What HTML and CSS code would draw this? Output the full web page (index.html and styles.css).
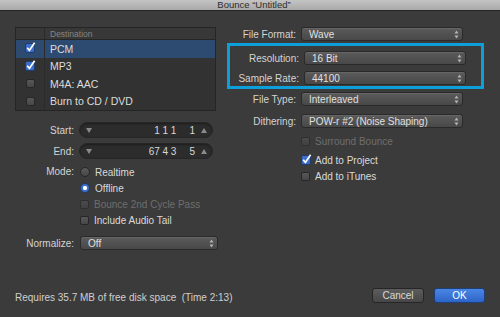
FILE: index.html
```html
<!DOCTYPE html>
<html lang="en">
<head>
    <meta charset="UTF-8">
    <title>Bounce "Untitled"</title>
    <link rel="stylesheet" href="styles.css">
</head>
<body>
<div class="window">
    <div class="titlebar">Bounce “Untitled”</div>

    <div class="main">
        <!-- Left side: destinations and range -->
        <div class="col-left">
            <div class="dest-table">
                <div class="dest-row dest-head">
                    <span class="dest-check"></span>
                    <span class="dest-name">Destination</span>
                </div>
                <div class="dest-row selected">
                    <span class="dest-check">
                        <svg class="check" width="11" height="11" viewBox="0 0 11 11"><rect x="0.5" y="1.5" width="9" height="9" rx="1.5" fill="#3b6fc9" stroke="#1f3c6e"/><path d="M2.2 5.8 L4.4 8.4 L9.6 0.8" fill="none" stroke="#fff" stroke-width="1.7"/></svg>
                    </span>
                    <span class="dest-name">PCM</span>
                </div>
                <div class="dest-row">
                    <span class="dest-check">
                        <svg class="check" width="11" height="11" viewBox="0 0 11 11"><rect x="0.5" y="1.5" width="9" height="9" rx="1.5" fill="#3b6fc9" stroke="#1f3c6e"/><path d="M2.2 5.8 L4.4 8.4 L9.6 0.8" fill="none" stroke="#fff" stroke-width="1.7"/></svg>
                    </span>
                    <span class="dest-name">MP3</span>
                </div>
                <div class="dest-row">
                    <span class="dest-check"><span class="box"></span></span>
                    <span class="dest-name">M4A: AAC</span>
                </div>
                <div class="dest-row">
                    <span class="dest-check"><span class="box"></span></span>
                    <span class="dest-name">Burn to CD / DVD</span>
                </div>
            </div>

            <div class="field-row start-row">
                <span class="label">Start:</span>
                <div class="stepper">
                    <svg width="6" height="5" viewBox="0 0 6 5"><path d="M0 0 H6 L3 5Z" fill="#8a8a8a"/></svg>
                    <span class="step-main">1 1 1</span>
                    <span class="step-last">1</span>
                    <svg width="6" height="5" viewBox="0 0 6 5"><path d="M0 5 H6 L3 0Z" fill="#8a8a8a"/></svg>
                </div>
            </div>
            <div class="field-row end-row">
                <span class="label">End:</span>
                <div class="stepper">
                    <svg width="6" height="5" viewBox="0 0 6 5"><path d="M0 0 H6 L3 5Z" fill="#8a8a8a"/></svg>
                    <span class="step-main">67 4 3</span>
                    <span class="step-last">5</span>
                    <svg width="6" height="5" viewBox="0 0 6 5"><path d="M0 5 H6 L3 0Z" fill="#8a8a8a"/></svg>
                </div>
            </div>

            <div class="mode-grid">
                <span class="label">Mode:</span>
                <div class="options">
                    <div class="option"><span class="radio"></span>Realtime</div>
                    <div class="option"><span class="radio on"></span>Offline</div>
                    <div class="option disabled"><span class="box"></span>Bounce 2nd Cycle Pass</div>
                    <div class="option"><span class="box"></span>Include Audio Tail</div>
                </div>
            </div>

            <div class="field-row normalize-row">
                <span class="label">Normalize:</span>
                <div class="popup">
                    <span>Off</span>
                    <svg class="updown" width="5" height="9" viewBox="0 0 5 9"><path d="M2.5 0.5 L4.5 3.5 H0.5Z M2.5 8.5 L0.5 5.5 H4.5Z" fill="#b4b4b4"/></svg>
                </div>
            </div>
        </div>

        <!-- Right side: file settings -->
        <div class="col-right">
            <div class="form-row first">
                <span class="label">File Format:</span>
                <div class="popup"><span>Wave</span><svg class="updown" width="5" height="9" viewBox="0 0 5 9"><path d="M2.5 0.5 L4.5 3.5 H0.5Z M2.5 8.5 L0.5 5.5 H4.5Z" fill="#b4b4b4"/></svg></div>
            </div>
            <div class="highlight">
                <div class="form-row">
                    <span class="label">Resolution:</span>
                    <div class="popup"><span>16 Bit</span><svg class="updown" width="5" height="9" viewBox="0 0 5 9"><path d="M2.5 0.5 L4.5 3.5 H0.5Z M2.5 8.5 L0.5 5.5 H4.5Z" fill="#b4b4b4"/></svg></div>
                </div>
                <div class="form-row">
                    <span class="label">Sample Rate:</span>
                    <div class="popup"><span>44100</span><svg class="updown" width="5" height="9" viewBox="0 0 5 9"><path d="M2.5 0.5 L4.5 3.5 H0.5Z M2.5 8.5 L0.5 5.5 H4.5Z" fill="#b4b4b4"/></svg></div>
                </div>
            </div>
            <div class="form-row filetype">
                <span class="label">File Type:</span>
                <div class="popup"><span>Interleaved</span><svg class="updown" width="5" height="9" viewBox="0 0 5 9"><path d="M2.5 0.5 L4.5 3.5 H0.5Z M2.5 8.5 L0.5 5.5 H4.5Z" fill="#b4b4b4"/></svg></div>
            </div>
            <div class="form-row dithering">
                <span class="label">Dithering:</span>
                <div class="popup"><span>POW-r #2 (Noise Shaping)</span><svg class="updown" width="5" height="9" viewBox="0 0 5 9"><path d="M2.5 0.5 L4.5 3.5 H0.5Z M2.5 8.5 L0.5 5.5 H4.5Z" fill="#b4b4b4"/></svg></div>
            </div>

            <div class="checks">
                <div class="option disabled surround"><span class="box"></span>Surround Bounce</div>
                <div class="option">
                    <svg class="check" width="11" height="11" viewBox="0 0 11 11"><rect x="0.5" y="1.5" width="9" height="9" rx="1.5" fill="#3b6fc9" stroke="#1f3c6e"/><path d="M2.2 5.8 L4.4 8.4 L9.6 0.8" fill="none" stroke="#fff" stroke-width="1.7"/></svg>
                    Add to Project
                </div>
                <div class="option"><span class="box"></span>Add to iTunes</div>
            </div>
        </div>
    </div>

    <div class="footer">
        <span class="disk">Requires 35.7 MB of free disk space  (Time 2:13)</span>
        <button class="btn cancel">Cancel</button>
        <button class="btn ok">OK</button>
    </div>
</div>
</body>
</html>
```

FILE: styles.css
```css
body {
    margin: 0;
    background: #3b3b3b;
    font-family: "Liberation Sans", Arial, sans-serif;
    font-size: 10px;
    color: #d6d6d6;
}
.window {
    width: 500px;
    height: 317px;
    display: flex;
    flex-direction: column;
    background: #3b3b3b;
    overflow: hidden;
}
.titlebar {
    height: 10px;
    line-height: 10px;
    font-size: 9.5px;
    padding-left: 8px;
    text-align: center;
    color: #2e2e2e;
    background: linear-gradient(#c4c4c4, #a9a9a9);
    border-bottom: 1px solid #262626;
}
.main {
    flex: 1;
    display: flex;
    gap: 12px;
    padding: 0 19px 0 15px;
}
.label {
    text-align: right;
    color: #d4d4d4;
}

/* ---- left column ---- */
.col-left {
    width: 203px;
}
.dest-table {
    width: 199px;
    margin-top: 16px;
    background: #323232;
    border: 1px solid #252525;
}
.dest-row {
    display: flex;
    height: 17.5px;
    align-items: center;
    font-size: 10.5px;
    color: #dcdcdc;
}
.dest-row.selected {
    background: #2d4a70;
}
.dest-head {
    height: 11px;
    font-size: 8.5px;
    color: #858585;
    background: #383838;
    border-bottom: 1px solid #262626;
}
.dest-check {
    width: 28px;
    height: 100%;
    display: flex;
    align-items: center;
    justify-content: center;
    border-right: 1px solid #2b2b2b;
}
.dest-check .check {
    margin: -2px 0 0 1px;
}
.dest-name {
    padding-left: 5px;
}
.box {
    width: 9px;
    height: 9px;
    box-sizing: border-box;
    border: 1px solid #272727;
    border-radius: 2px;
    background: linear-gradient(#575757, #474747);
}
.field-row {
    display: flex;
    align-items: center;
    gap: 5px;
}
.field-row .label {
    width: 59px;
}
.start-row {
    margin-top: 11px;
}
.end-row {
    margin-top: 5px;
}
.stepper {
    width: 134px;
    height: 16px;
    box-sizing: border-box;
    display: flex;
    align-items: center;
    padding: 0 5px 0 6px;
    background: #2c2c2c;
    border: 1px solid #262626;
    border-radius: 8px;
    box-shadow: inset 0 1px 2px rgba(0, 0, 0, 0.35);
    color: #d8d8d8;
}
.step-main {
    margin-left: auto;
    white-space: pre;
}
.step-last {
    margin-left: 13px;
    margin-right: 6px;
}
.mode-grid {
    display: flex;
    gap: 6px;
    margin-top: 5px;
}
.mode-grid .label {
    width: 59px;
    line-height: 16px;
}
.option {
    display: flex;
    align-items: center;
    gap: 5px;
    height: 16px;
    color: #dadada;
}
.option.disabled {
    color: #6e6e6e;
}
.option.disabled .box {
    opacity: 0.55;
}
.option .check {
    margin: -2px -2px 0 0;
}
.radio {
    width: 10px;
    height: 10px;
    box-sizing: border-box;
    border-radius: 50%;
    border: 1px solid #272727;
    background: linear-gradient(#5a5a5a, #474747);
}
.radio.on {
    border-color: #1f3c6e;
    background: radial-gradient(circle, #fff 0 1.8px, #3b6fc9 2.4px);
}
.normalize-row {
    margin-top: 8px;
    gap: 6px;
}
.popup {
    height: 14px;
    box-sizing: border-box;
    display: flex;
    align-items: center;
    justify-content: space-between;
    padding: 0 3px 0 7px;
    background: linear-gradient(#5b5b5b, #484848);
    border: 1px solid #2a2a2a;
    border-radius: 3px;
    box-shadow: inset 0 1px 0 rgba(255, 255, 255, 0.08);
    color: #e0e0e0;
}
.normalize-row .popup {
    width: 138px;
}

/* ---- right column ---- */
.col-right {
    width: 251px;
}
.form-row {
    display: flex;
    align-items: center;
    gap: 5px;
}
.form-row .label {
    width: 66px;
}
.form-row .popup {
    width: 162px;
}
.form-row.first {
    margin-top: 16px;
}
.highlight {
    margin: 2px -3px 0;
    padding: 5px 3px 1px;
    border: 3px solid #0c9fd9;
    display: flex;
    flex-direction: column;
    gap: 6px;
}
.filetype {
    margin-top: 3px;
}
.dithering {
    margin-top: 8px;
}
.checks {
    margin: 5px 0 0 71px;
}
.surround {
    margin-bottom: 3px;
}

/* ---- footer ---- */
.footer {
    display: flex;
    align-items: center;
    padding: 0 15px 14px;
}
.disk {
    white-space: pre;
    margin-top: 3px;
    color: #cfcfcf;
}
.btn {
    height: 15px;
    padding: 0;
    font-family: inherit;
    font-size: 10px;
    border-radius: 3px;
    border: 1px solid #262626;
}
.cancel {
    width: 52px;
    margin-left: auto;
    color: #dadada;
    background: linear-gradient(#5c5c5c, #474747);
}
.ok {
    width: 51px;
    margin-left: 10px;
    color: #fff;
    background: linear-gradient(#4a86e4, #2d64c8);
    border-color: #1e3f7a;
}
```
